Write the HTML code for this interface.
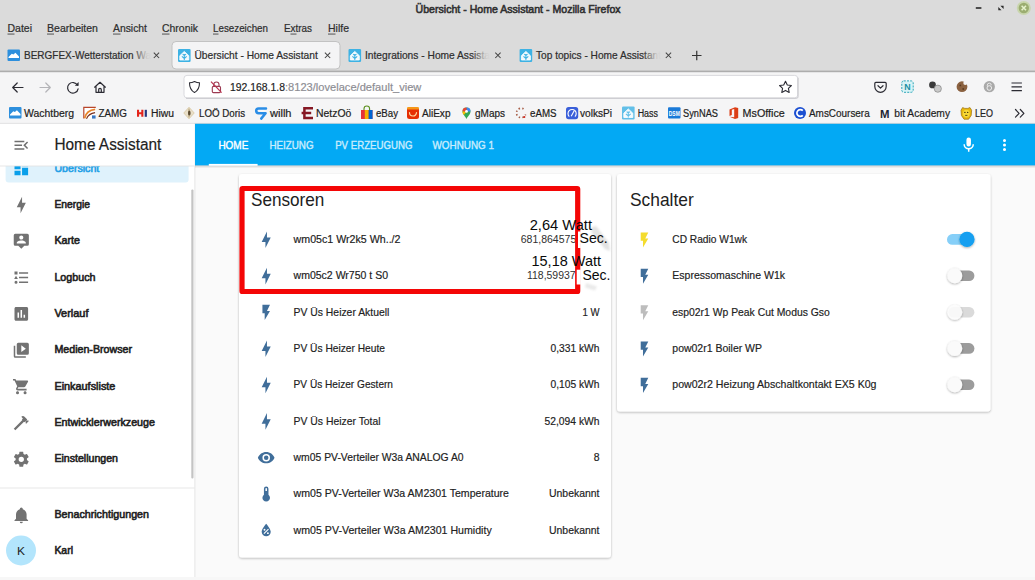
<!DOCTYPE html>
<html lang="de"><head><meta charset="utf-8"><title>Übersicht - Home Assistant</title>
<style>
*{margin:0;padding:0;box-sizing:border-box}
html,body{width:1035px;height:580px;overflow:hidden;background:#fafafa;font-family:"Liberation Sans",sans-serif}
svg text{font-family:"Liberation Sans",sans-serif;white-space:pre}
</style></head><body>
<svg width="1035" height="580" viewBox="0 0 1035 580" font-family="Liberation Sans, sans-serif" style="position:absolute;left:0;top:0;display:block">
<rect x="0.0" y="0.0" width="1035.0" height="580.0" fill="#fafafa"/>
<rect x="0.0" y="0.0" width="1035.0" height="71.0" fill="#dbdbdb"/>
<rect x="0.0" y="71.0" width="1035.0" height="53.0" fill="#f5f5f6"/>
<rect x="0.0" y="70.6" width="1035.0" height="1.4" fill="#adadad"/>
<rect x="0.0" y="72.0" width="1035.0" height="0.8" fill="#e2e2e3"/>
<text x="415.6" y="12.5" textLength="205.0" lengthAdjust="spacingAndGlyphs" font-size="11.60" font-weight="normal" fill="#303030" stroke="#303030" stroke-width="0.6">Übersicht - Home Assistant - Mozilla Firefox</text>
<rect x="975.8" y="7.2" width="5.6" height="1.6" fill="#2a2a2a"/>
<path d="M1000.4 5.7h3.2v3.2zM998.3 7.1l3.2 3.2h-3.2z" fill="#2a2a2a"/>
<circle cx="1023.8" cy="8" r="7" fill="#c9d6ad"/><circle cx="1023.8" cy="8" r="5.2" fill="#9bad70"/><path d="M1021.6 5.8l4.4 4.4M1026 5.8l-4.4 4.4" stroke="#e6f2cc" stroke-width="1.6" fill="none"/>
<text x="7.5" y="32.0" textLength="24.5" lengthAdjust="spacingAndGlyphs" font-size="11.40" font-weight="normal" fill="#2e2e2e" stroke="#2e2e2e" stroke-width="0.22">Datei</text>
<rect x="7.5" y="33.6" width="7.0" height="0.9" fill="#444"/>
<text x="47.0" y="32.0" textLength="51.0" lengthAdjust="spacingAndGlyphs" font-size="11.40" font-weight="normal" fill="#2e2e2e" stroke="#2e2e2e" stroke-width="0.22">Bearbeiten</text>
<rect x="47.0" y="33.6" width="7.0" height="0.9" fill="#444"/>
<text x="113.0" y="32.0" textLength="34.0" lengthAdjust="spacingAndGlyphs" font-size="11.40" font-weight="normal" fill="#2e2e2e" stroke="#2e2e2e" stroke-width="0.22">Ansicht</text>
<rect x="113.0" y="33.6" width="7.5" height="0.9" fill="#444"/>
<text x="162.0" y="32.0" textLength="36.0" lengthAdjust="spacingAndGlyphs" font-size="11.40" font-weight="normal" fill="#2e2e2e" stroke="#2e2e2e" stroke-width="0.22">Chronik</text>
<rect x="162.0" y="33.6" width="7.5" height="0.9" fill="#444"/>
<text x="213.0" y="32.0" textLength="55.0" lengthAdjust="spacingAndGlyphs" font-size="11.40" font-weight="normal" fill="#2e2e2e" stroke="#2e2e2e" stroke-width="0.22">Lesezeichen</text>
<rect x="213.0" y="33.6" width="5.5" height="0.9" fill="#444"/>
<text x="284.0" y="32.0" textLength="28.0" lengthAdjust="spacingAndGlyphs" font-size="11.40" font-weight="normal" fill="#2e2e2e" stroke="#2e2e2e" stroke-width="0.22">Extras</text>
<rect x="290.5" y="33.6" width="6.0" height="0.9" fill="#444"/>
<text x="328.0" y="32.0" textLength="21.0" lengthAdjust="spacingAndGlyphs" font-size="11.40" font-weight="normal" fill="#2e2e2e" stroke="#2e2e2e" stroke-width="0.22">Hilfe</text>
<rect x="328.0" y="33.6" width="7.5" height="0.9" fill="#444"/>
<rect x="172" y="41.5" width="168" height="27.5" rx="4" fill="#f4f4f5" stroke="#c2c2c2" stroke-width="1"/>
<rect x="7.5" y="49.5" width="12.5" height="11.5" fill="#2d8fdd" rx="1.0"/>
<path d="M8.5 57.1l3.3 -3.4l1.6 0.8l2 -1.8l3.6 3.8v1.6h-10.5z" fill="#fff"/>
<text x="24.0" y="59.0" textLength="127.0" lengthAdjust="spacingAndGlyphs" font-size="11.40" font-weight="normal" fill="#2e2e2e" stroke="#2e2e2e" stroke-width="0.22">BERGFEX-Wetterstation Wa</text>
<path d="M153.8 52.7l5.3 5.3m0 -5.3l-5.3 5.3" stroke="#444" stroke-width="1.05" fill="none"/>
<rect x="178.0" y="48.9" width="12.6" height="13.0" fill="#3db2e4" rx="1.2"/>
<path d="M179.8 55.7l4.5 -4.3l4.5 4.3v4.3h-9z" fill="#ffffff" fill-opacity="0.92" stroke="#fff" stroke-width="0.8" stroke-linejoin="round"/>
<path d="M184.3 60.1v-6.2m-2.4 2.4l2.4 2.2l2.4 -2.2m-4 -2.2l1.6 1.5l1.6 -1.5" fill="none" stroke="#3db2e4" stroke-width="1.05"/>
<text x="194.4" y="59.0" textLength="123.4" lengthAdjust="spacingAndGlyphs" font-size="11.40" font-weight="normal" fill="#2e2e2e" stroke="#2e2e2e" stroke-width="0.22">Übersicht - Home Assistant</text>
<path d="M324.9 52.7l5.3 5.3m0 -5.3l-5.3 5.3" stroke="#444" stroke-width="1.05" fill="none"/>
<rect x="348.5" y="48.9" width="12.6" height="13.0" fill="#3db2e4" rx="1.2"/>
<path d="M350.3 55.7l4.5 -4.3l4.5 4.3v4.3h-9z" fill="#ffffff" fill-opacity="0.92" stroke="#fff" stroke-width="0.8" stroke-linejoin="round"/>
<path d="M354.8 60.1v-6.2m-2.4 2.4l2.4 2.2l2.4 -2.2m-4 -2.2l1.6 1.5l1.6 -1.5" fill="none" stroke="#3db2e4" stroke-width="1.05"/>
<text x="365.0" y="59.0" textLength="125.0" lengthAdjust="spacingAndGlyphs" font-size="11.40" font-weight="normal" fill="#2e2e2e" stroke="#2e2e2e" stroke-width="0.22">Integrations - Home Assista</text>
<path d="M495.3 52.7l5.3 5.3m0 -5.3l-5.3 5.3" stroke="#444" stroke-width="1.05" fill="none"/>
<rect x="519.6" y="48.9" width="12.6" height="13.0" fill="#3db2e4" rx="1.2"/>
<path d="M521.4 55.7l4.5 -4.3l4.5 4.3v4.3h-9z" fill="#ffffff" fill-opacity="0.92" stroke="#fff" stroke-width="0.8" stroke-linejoin="round"/>
<path d="M525.9 60.1v-6.2m-2.4 2.4l2.4 2.2l2.4 -2.2m-4 -2.2l1.6 1.5l1.6 -1.5" fill="none" stroke="#3db2e4" stroke-width="1.05"/>
<text x="536.0" y="59.0" textLength="125.0" lengthAdjust="spacingAndGlyphs" font-size="11.40" font-weight="normal" fill="#2e2e2e" stroke="#2e2e2e" stroke-width="0.22">Top topics - Home Assistant</text>
<path d="M665.8 52.7l5.3 5.3m0 -5.3l-5.3 5.3" stroke="#444" stroke-width="1.05" fill="none"/>
<defs><linearGradient id="fd"><stop offset="0" stop-color="#dbdbdb" stop-opacity="0"/><stop offset="0.75" stop-color="#dbdbdb" stop-opacity="0.93"/><stop offset="1" stop-color="#dbdbdb" stop-opacity="1"/></linearGradient></defs>
<rect x="133.0" y="46.0" width="19.0" height="18.0" fill="url(#fd)"/>
<rect x="472.0" y="46.0" width="19.0" height="18.0" fill="url(#fd)"/>
<rect x="643.0" y="46.0" width="19.0" height="18.0" fill="url(#fd)"/>
<path d="M692 55.5h9.5M696.75 50.8v9.5" stroke="#333" stroke-width="1.2" fill="none"/>
<rect x="184" y="75.4" width="613.7" height="22.5" rx="3" fill="#fff" stroke="#d6d6da" stroke-width="0.9"/><path d="M186 98.3h610.5a1.6 1.6 0 0 0 1.6 -1.6v-19" stroke="#c4c4c8" stroke-width="0.9" fill="none"/>
<path d="M23 87.5h-10M17.2 83l-4.5 4.5l4.5 4.5" stroke="#2b2b33" stroke-width="1.2" fill="none" stroke-linecap="round" stroke-linejoin="round"/>
<path d="M40 87.5h10M45.8 83l4.5 4.5l-4.5 4.5" stroke="#b4b4b8" stroke-width="1.2" fill="none" stroke-linecap="round" stroke-linejoin="round"/>
<path d="M77.5 85.2a5.3 5.3 0 1 0 0.6 3.6" stroke="#2b2b33" stroke-width="1.2" fill="none" stroke-linecap="round"/><path d="M78.6 82v3.8h-3.8z" fill="#2b2b33"/>
<path d="M94.6 87.2l5.4 -4.9l5.4 4.9M96 86.2v6.1h8v-6.1M98.7 92.3v-2.6a1.3 1.3 0 0 1 2.6 0v2.6" stroke="#2b2b33" stroke-width="1.2" fill="none" stroke-linejoin="round" stroke-linecap="round"/>
<path d="M194.5 81.5c1.8 1 3.4 1.3 5 1.3c0 4.5 -1.2 7.8 -5 9.7c-3.8 -1.9 -5 -5.2 -5 -9.7c1.6 0 3.2 -0.3 5 -1.3z" stroke="#2b2b33" stroke-width="1.1" fill="none" stroke-linejoin="round"/>
<rect x="212.3" y="86.4" width="8.2" height="6.2" rx="1.2" stroke="#9c3a52" stroke-width="1.1" fill="none"/><path d="M213.8 86.4v-1.8a2.6 2.6 0 0 1 5.2 0v1.8" stroke="#9c3a52" stroke-width="1.1" fill="none"/><path d="M211 81.6l10.6 11" stroke="#b8324e" stroke-width="1.2"/>
<text x="230.0" y="91.3" textLength="55.0" lengthAdjust="spacingAndGlyphs" font-size="11.00" font-weight="normal" fill="#1c1c22" stroke="#1c1c22" stroke-width="0.18">192.168.1.8</text>
<text x="285.0" y="91.3" textLength="136.4" lengthAdjust="spacingAndGlyphs" font-size="11.00" font-weight="normal" fill="#8d8d93" stroke="#8d8d93" stroke-width="0.18">:8123/lovelace/default_view</text>
<path d="M785.5 81.2l1.8 3.8l4.1 0.5l-3 2.8l0.8 4.1l-3.7 -2l-3.7 2l0.8 -4.1l-3 -2.8l4.1 -0.5z" stroke="#2b2b33" stroke-width="1.1" fill="none" stroke-linejoin="round"/>
<g transform="translate(0,-0.6)">
<path d="M875.8 83h9.4a1 1 0 0 1 1 1v3.2a5.7 5.7 0 0 1 -11.4 0v-3.2a1 1 0 0 1 1 -1z" stroke="#2b2b33" stroke-width="1.2" fill="none"/><path d="M878 86.3l2.5 2.4l2.5 -2.4" stroke="#2b2b33" stroke-width="1.2" fill="none" stroke-linecap="round" stroke-linejoin="round"/>
<rect x="901.8" y="81.5" width="11.4" height="11.4" rx="2" fill="#d8f3f6" stroke="#2aa5b8" stroke-width="1" stroke-dasharray="2 1.2"/>
<text x="904.3" y="91.0" textLength="6.4" lengthAdjust="spacingAndGlyphs" font-size="9.50" font-weight="bold" fill="#1b8fa3">N</text>
<circle cx="932.5" cy="85.5" r="3.4" fill="#3a3a3a"/><circle cx="937.8" cy="89.3" r="3.6" fill="#c9c9c9" stroke="#777" stroke-width="0.6"/>
<circle cx="962" cy="87.3" r="5.4" fill="#8a6140"/><circle cx="965.3" cy="83.6" r="2" fill="#f5f5f6"/><circle cx="960.3" cy="86" r="0.9" fill="#5a3a20"/><circle cx="963.2" cy="89.6" r="0.9" fill="#5a3a20"/>
<circle cx="989.3" cy="87.3" r="5.6" fill="#a9a9a9"/><circle cx="989.3" cy="88.6" r="2.3" fill="none" stroke="#eee" stroke-width="1"/><path d="M987.3 87v-1.2a2 2 0 0 1 4 0" stroke="#eee" stroke-width="0.9" fill="none"/>
<path d="M1011.5 83.6h10.4M1011.5 87.4h10.4M1011.5 91.2h10.4" stroke="#2b2b33" stroke-width="1.2"/>
</g>
<text x="24.0" y="117.0" textLength="50.0" lengthAdjust="spacingAndGlyphs" font-size="11.70" font-weight="normal" fill="#1e1e22" stroke="#1e1e22" stroke-width="0.22">Wachtberg</text>
<text x="98.5" y="117.0" textLength="28.5" lengthAdjust="spacingAndGlyphs" font-size="11.70" font-weight="normal" fill="#1e1e22" stroke="#1e1e22" stroke-width="0.22">ZAMG</text>
<text x="151.0" y="117.0" textLength="23.0" lengthAdjust="spacingAndGlyphs" font-size="11.70" font-weight="normal" fill="#1e1e22" stroke="#1e1e22" stroke-width="0.22">Hiwu</text>
<text x="199.0" y="117.0" textLength="46.0" lengthAdjust="spacingAndGlyphs" font-size="11.70" font-weight="normal" fill="#1e1e22" stroke="#1e1e22" stroke-width="0.22">LOÖ Doris</text>
<text x="270.0" y="117.0" textLength="21.5" lengthAdjust="spacingAndGlyphs" font-size="11.70" font-weight="normal" fill="#1e1e22" stroke="#1e1e22" stroke-width="0.22">willh</text>
<text x="316.0" y="117.0" textLength="35.3" lengthAdjust="spacingAndGlyphs" font-size="11.70" font-weight="normal" fill="#1e1e22" stroke="#1e1e22" stroke-width="0.22">NetzOö</text>
<text x="376.0" y="117.0" textLength="22.0" lengthAdjust="spacingAndGlyphs" font-size="11.70" font-weight="normal" fill="#1e1e22" stroke="#1e1e22" stroke-width="0.22">eBay</text>
<text x="422.0" y="117.0" textLength="28.5" lengthAdjust="spacingAndGlyphs" font-size="11.70" font-weight="normal" fill="#1e1e22" stroke="#1e1e22" stroke-width="0.22">AliExp</text>
<text x="475.0" y="117.0" textLength="30.0" lengthAdjust="spacingAndGlyphs" font-size="11.70" font-weight="normal" fill="#1e1e22" stroke="#1e1e22" stroke-width="0.22">gMaps</text>
<text x="530.0" y="117.0" textLength="26.5" lengthAdjust="spacingAndGlyphs" font-size="11.70" font-weight="normal" fill="#1e1e22" stroke="#1e1e22" stroke-width="0.22">eAMS</text>
<text x="580.0" y="117.0" textLength="32.0" lengthAdjust="spacingAndGlyphs" font-size="11.70" font-weight="normal" fill="#1e1e22" stroke="#1e1e22" stroke-width="0.22">volksPi</text>
<text x="637.7" y="117.0" textLength="20.3" lengthAdjust="spacingAndGlyphs" font-size="11.70" font-weight="normal" fill="#1e1e22" stroke="#1e1e22" stroke-width="0.22">Hass</text>
<text x="683.0" y="117.0" textLength="35.0" lengthAdjust="spacingAndGlyphs" font-size="11.70" font-weight="normal" fill="#1e1e22" stroke="#1e1e22" stroke-width="0.22">SynNAS</text>
<text x="742.6" y="117.0" textLength="42.2" lengthAdjust="spacingAndGlyphs" font-size="11.70" font-weight="normal" fill="#1e1e22" stroke="#1e1e22" stroke-width="0.22">MsOffice</text>
<text x="809.0" y="117.0" textLength="60.7" lengthAdjust="spacingAndGlyphs" font-size="11.70" font-weight="normal" fill="#1e1e22" stroke="#1e1e22" stroke-width="0.22">AmsCoursera</text>
<text x="894.3" y="117.0" textLength="55.7" lengthAdjust="spacingAndGlyphs" font-size="11.70" font-weight="normal" fill="#1e1e22" stroke="#1e1e22" stroke-width="0.22">bit Academy</text>
<text x="975.0" y="117.0" textLength="18.0" lengthAdjust="spacingAndGlyphs" font-size="11.70" font-weight="normal" fill="#1e1e22" stroke="#1e1e22" stroke-width="0.22">LEO</text>
<rect x="9.0" y="107.0" width="12.5" height="11.5" fill="#2d8fdd" rx="1.0"/>
<path d="M10.0 114.6l3.3 -3.4l1.6 0.8l2 -1.8l3.6 3.8v1.6h-10.5z" fill="#fff"/>
<rect x="83.5" y="107" width="12.3" height="11.6" fill="#fff"/><path d="M83.8 118.6v-11.3h12" stroke="#b8452a" stroke-width="1.2" fill="none"/><path d="M84.6 118.2c1.2 -5.2 5 -8.2 10.6 -8.8" stroke="#e8852a" stroke-width="1.7" fill="none"/><path d="M86.5 118.8c1.4 -3.6 4.2 -5.6 8.6 -6.2" stroke="#7a3020" stroke-width="1.1" fill="none"/><rect x="92" y="115.4" width="3.6" height="3.2" fill="#3a78c2"/>
<path d="M137 109.8h2.1v2.5h2.2v-2.5h2.1v7h-2.1v-2.6h-2.2v2.6h-2.1z" fill="#e3241b"/><rect x="144.7" y="109.8" width="2.2" height="7" fill="#27367f"/>
<path d="M189 107l5.5 6l-5.5 6l-5.5 -6z" fill="#e9dfc9"/><path d="M189 108.5v9" stroke="#b09a6a" stroke-width="1"/><ellipse cx="189.3" cy="113" rx="1.3" ry="2.6" fill="#5a4a30"/><path d="M183.8 113l5.2 -5.8l5.2 5.8l-5.2 5.8z" fill="none" stroke="#d9caa8" stroke-width="0.8"/>
<path d="M266 108.4h-7.4a2.4 2.4 0 0 0 0 4.8h7l-4.4 5.4" stroke="#2a8de6" stroke-width="2.5" fill="none" stroke-linejoin="round" stroke-linecap="round"/><path d="M260.5 110.9h4" stroke="#fff" stroke-width="0.7"/>
<path d="M313 108.3h-8.6v9.6h8.6M301.6 113.1h9.6" stroke="#861824" stroke-width="2.5" fill="none"/>
<rect x="361" y="110" width="11.5" height="9" fill="#e53238"/><rect x="364.8" y="110" width="3.9" height="9" fill="#f5af02"/><rect x="368.7" y="110" width="3.8" height="9" fill="#0064d2"/><rect x="361" y="110" width="2" height="9" fill="#86b817" opacity="0"/><path d="M364 110v-1.2a2.8 2.8 0 0 1 5.6 0v1.2" stroke="#5a8f1c" stroke-width="1.1" fill="none"/>
<rect x="407" y="107" width="12" height="12" rx="2.5" fill="#e62e04"/><path d="M409.5 112.5a3.5 3.5 0 0 0 7 0" stroke="#ffd9a0" stroke-width="1.2" fill="none" stroke-linecap="round"/><rect x="407" y="107" width="12" height="2.6" rx="1.2" fill="#f6a21a" opacity="0.9"/>
<path d="M466.5 119c-1.2 -3 -4 -4.6 -4 -7.6a4 4 0 0 1 8 0c0 3 -2.8 4.6 -4 7.6z" fill="#34a853"/><path d="M466.5 107.4a4 4 0 0 1 4 4l-4 0z" fill="#4285f4"/><path d="M462.5 111.4a4 4 0 0 1 4 -4v4z" fill="#ea4335"/><path d="M462.5 111.4h4l-2.6 3.6c-0.9 -1.1 -1.4 -2.2 -1.4 -3.6z" fill="#fbbc04"/><circle cx="466.5" cy="111.4" r="1.4" fill="#fff"/>
<path d="M523.6 108.9a4.7 4.7 0 1 0 2 5.6" fill="none" stroke="#a8604a" stroke-width="1.6" stroke-dasharray="1.5 2.1"/><circle cx="524.3" cy="117" r="1.1" fill="#d1281e"/>
<rect x="566" y="107" width="12.2" height="12.2" rx="2.6" fill="#3a5fd9"/><path d="M569.3 116.6a4.1 4.1 0 1 1 5.6 0" stroke="#fff" stroke-width="1.1" fill="none"/><path d="M571.2 116.3l3 -5.6" stroke="#fff" stroke-width="1.1"/>
<rect x="622.0" y="106.4" width="12.6" height="13.0" fill="#62bfe8" rx="1.2"/>
<path d="M623.8 113.2l4.5 -4.3l4.5 4.3v4.3h-9z" fill="#ffffff" fill-opacity="0.92" stroke="#fff" stroke-width="0.8" stroke-linejoin="round"/>
<path d="M628.3 117.6v-6.2m-2.4 2.4l2.4 2.2l2.4 -2.2m-4 -2.2l1.6 1.5l1.6 -1.5" fill="none" stroke="#62bfe8" stroke-width="1.05"/>
<rect x="668.0" y="107.2" width="12.5" height="11.4" fill="#1a7ad8" rx="1.0"/>
<text x="668.8" y="116.0" textLength="11.0" lengthAdjust="spacingAndGlyphs" font-size="7.60" font-weight="bold" fill="#fff">DSM</text>
<path d="M729.5 109.5l5.5 -2.3l3.2 0.9v10l-3.2 0.9l-5.5 -2.3l4.7 0.6v-8.2l-2.4 0.6v5.4l-2.3 0.9z" fill="#dc3e15"/>
<circle cx="800" cy="113" r="6" fill="#1b4fd1"/><path d="M802.8 110.7a3.4 3.4 0 1 0 0 4.6" stroke="#fff" stroke-width="1.7" fill="none"/>
<text x="880.0" y="117.5" textLength="9.5" lengthAdjust="spacingAndGlyphs" font-size="11.50" font-weight="bold" fill="#1d2433">M</text>
<path d="M961 110.2l1.6 -2.6l2.2 0.8h3l2.2 -0.8l1.6 2.6l-0.4 5.2l-2.6 3.8h-4.6l-2.6 -3.8z" fill="#e9b90f" stroke="#9a6f0c" stroke-width="0.7"/><ellipse cx="966.3" cy="113.6" rx="3.4" ry="3.8" fill="#f8d936"/><circle cx="964.9" cy="112.4" r="0.7" fill="#3a2a08"/><circle cx="967.7" cy="112.4" r="0.7" fill="#3a2a08"/><path d="M965.2 115.4h2.2" stroke="#3a2a08" stroke-width="0.8"/>
<path d="M1015.5 109.5l3.6 3.8l-3.6 3.8M1020.3 109.5l3.6 3.8l-3.6 3.8" stroke="#2b2b33" stroke-width="1.2" fill="none" stroke-linecap="round" stroke-linejoin="round"/>
<rect x="0.0" y="122.9" width="1035.0" height="0.9" fill="#d2d2d2"/>
<rect x="0.0" y="123.8" width="194.5" height="456.2" fill="#ffffff"/>
<rect x="194.5" y="123.8" width="0.8" height="456.2" fill="#e1e1e1"/>
<rect x="5.6" y="150.0" width="183.0" height="32.6" fill="#dff2fc" rx="3.0"/>
<path transform="translate(12.23 159.43) scale(0.756)" fill="#0a9fea" d="M13,3V9H21V3M13,21H21V11H13M3,21H11V15H3M3,13H11V3H3V13Z"/>
<text x="54.4" y="171.7" textLength="44.9" lengthAdjust="spacingAndGlyphs" font-size="11.10" font-weight="normal" fill="#1f9fe6" stroke="#1f9fe6" stroke-width="0.6">Übersicht</text>
<rect x="0.0" y="123.8" width="194.5" height="42.2" fill="#ffffff"/>
<rect x="0.0" y="165.6" width="194.5" height="0.8" fill="#e1e1e1"/>
<path transform="translate(12.23 136.13) scale(0.756)" fill="#6f6f6f" d="M21,15.61L19.59,17L14.58,12L19.59,7L21,8.39L17.44,12L21,15.61M3,6H16V8H3V6M3,13V11H13V13H3M3,18V16H16V18H3Z"/>
<text x="54.4" y="150.4" textLength="106.9" lengthAdjust="spacingAndGlyphs" font-size="17.20" font-weight="normal" fill="#212121" stroke="#212121" stroke-width="0.18">Home Assistant</text>
<text x="54.4" y="208.0" textLength="35.6" lengthAdjust="spacingAndGlyphs" font-size="11.10" font-weight="normal" fill="#212121" stroke="#212121" stroke-width="0.6">Energie</text>
<path transform="translate(12.23 195.93) scale(0.756)" fill="#727272" d="M11,15H6L13,1V9H18L11,23V15Z"/>
<text x="54.4" y="244.3" textLength="25.6" lengthAdjust="spacingAndGlyphs" font-size="11.10" font-weight="normal" fill="#212121" stroke="#212121" stroke-width="0.6">Karte</text>
<path transform="translate(12.23 232.23) scale(0.756)" fill="#727272" d="M20,2H4A2,2 0 0,0 2,4V16A2,2 0 0,0 4,18H8L12,22L16,18H20A2,2 0 0,0 22,16V4A2,2 0 0,0 20,2M12,4.3C13.5,4.3 14.7,5.5 14.7,7C14.7,8.5 13.5,9.7 12,9.7C10.5,9.7 9.3,8.5 9.3,7C9.3,5.5 10.5,4.3 12,4.3M18,15H6V14.1C6,12.1 10,11 12,11C14,11 18,12.1 18,14.1V15Z"/>
<text x="54.4" y="280.6" textLength="41.1" lengthAdjust="spacingAndGlyphs" font-size="11.10" font-weight="normal" fill="#212121" stroke="#212121" stroke-width="0.6">Logbuch</text>
<path transform="translate(12.23 268.53) scale(0.756)" fill="#727272" d="M5,9.5L7.5,14H2.5L5,9.5M3,4H7V8H3V4M5,20A2,2 0 0,0 7,18A2,2 0 0,0 5,16A2,2 0 0,0 3,18A2,2 0 0,0 5,20M9,5V7H21V5H9M9,19H21V17H9V19M9,13H21V11H9V13Z"/>
<text x="54.4" y="316.9" textLength="34.1" lengthAdjust="spacingAndGlyphs" font-size="11.10" font-weight="normal" fill="#212121" stroke="#212121" stroke-width="0.6">Verlauf</text>
<path transform="translate(12.23 304.83) scale(0.756)" fill="#727272" d="M19,3H5C3.9,3 3,3.9 3,5V19C3,20.1 3.9,21 5,21H19C20.1,21 21,20.1 21,19V5C21,3.9 20.1,3 19,3M9,17H7V10H9V17M13,17H11V7H13V17M17,17H15V13H17V17Z"/>
<text x="54.4" y="353.2" textLength="77.6" lengthAdjust="spacingAndGlyphs" font-size="11.10" font-weight="normal" fill="#212121" stroke="#212121" stroke-width="0.6">Medien-Browser</text>
<path transform="translate(12.23 341.13) scale(0.756)" fill="#727272" d="M4,6H2V20A2,2 0 0,0 4,22H18V20H4V6M20,2H8A2,2 0 0,0 6,4V16A2,2 0 0,0 8,18H20A2,2 0 0,0 22,16V4A2,2 0 0,0 20,2M12,14.5V5.5L18,10L12,14.5Z"/>
<text x="54.4" y="389.6" textLength="61.0" lengthAdjust="spacingAndGlyphs" font-size="11.10" font-weight="normal" fill="#212121" stroke="#212121" stroke-width="0.6">Einkaufsliste</text>
<path transform="translate(12.23 377.53) scale(0.756)" fill="#727272" d="M17,18C15.89,18 15,18.89 15,20A2,2 0 0,0 17,22A2,2 0 0,0 19,20C19,18.89 18.1,18 17,18M1,2V4H3L6.6,11.59L5.24,14.04C5.09,14.32 5,14.65 5,15A2,2 0 0,0 7,17H19V15H7.42A0.25,0.25 0 0,1 7.17,14.75C7.17,14.7 7.18,14.66 7.2,14.63L8.1,13H15.55C16.3,13 16.96,12.58 17.3,11.97L20.88,5.5C20.95,5.34 21,5.17 21,5A1,1 0 0,0 20,4H5.21L4.27,2M7,18C5.89,18 5,18.89 5,20A2,2 0 0,0 7,22A2,2 0 0,0 9,20C9,18.89 8.1,18 7,18Z"/>
<text x="54.4" y="425.9" textLength="100.6" lengthAdjust="spacingAndGlyphs" font-size="11.10" font-weight="normal" fill="#212121" stroke="#212121" stroke-width="0.6">Entwicklerwerkzeuge</text>
<path transform="translate(12.23 413.83) scale(0.756)" fill="#727272" d="M2,19.63L13.43,8.2L12.72,7.5L14.14,6.07L12,3.89C13.2,2.7 15.09,2.7 16.27,3.89L19.87,7.5L18.45,8.91H21.29L22,9.62L18.45,13.21L17.74,12.5V9.62L16.27,11.04L15.56,10.33L4.13,21.76L2,19.63Z"/>
<text x="54.4" y="462.3" textLength="63.6" lengthAdjust="spacingAndGlyphs" font-size="11.10" font-weight="normal" fill="#212121" stroke="#212121" stroke-width="0.6">Einstellungen</text>
<path transform="translate(12.23 450.23) scale(0.756)" fill="#727272" d="M12,15.5A3.5,3.5 0 0,1 8.5,12A3.5,3.5 0 0,1 12,8.5A3.5,3.5 0 0,1 15.5,12A3.5,3.5 0 0,1 12,15.5M19.43,12.97C19.47,12.65 19.5,12.33 19.5,12C19.5,11.67 19.47,11.34 19.43,11L21.54,9.37C21.73,9.22 21.78,8.95 21.66,8.73L19.66,5.27C19.54,5.05 19.27,4.96 19.05,5.05L16.56,6.05C16.04,5.66 15.5,5.32 14.87,5.07L14.5,2.42C14.46,2.18 14.25,2 14,2H10C9.75,2 9.54,2.18 9.5,2.42L9.13,5.07C8.5,5.32 7.96,5.66 7.44,6.05L4.95,5.05C4.73,4.96 4.46,5.05 4.34,5.27L2.34,8.73C2.21,8.95 2.27,9.22 2.46,9.37L4.57,11C4.53,11.34 4.5,11.67 4.5,12C4.5,12.33 4.53,12.65 4.57,12.97L2.46,14.63C2.27,14.78 2.21,15.05 2.34,15.27L4.34,18.73C4.46,18.95 4.73,19.03 4.95,18.95L7.44,17.94C7.96,18.34 8.5,18.68 9.13,18.93L9.5,21.58C9.54,21.82 9.75,22 10,22H14C14.25,22 14.46,21.82 14.5,21.58L14.87,18.93C15.5,18.67 16.04,18.34 16.56,17.94L19.05,18.95C19.27,19.03 19.54,18.95 19.66,18.73L21.66,15.27C21.78,15.05 21.73,14.78 21.54,14.63L19.43,12.97Z"/>
<text x="54.4" y="518.0" textLength="94.6" lengthAdjust="spacingAndGlyphs" font-size="11.10" font-weight="normal" fill="#212121" stroke="#212121" stroke-width="0.6">Benachrichtigungen</text>
<path transform="translate(12.23 505.93) scale(0.756)" fill="#727272" d="M21,19V20H3V19L5,17V11C5,7.9 7.03,5.17 10,4.29C10,4.19 10,4.1 10,4A2,2 0 0,1 12,2A2,2 0 0,1 14,4C14,4.1 14,4.19 14,4.29C16.97,5.17 19,7.9 19,11V17L21,19M14,21A2,2 0 0,1 12,23A2,2 0 0,1 10,21"/>
<rect x="0.0" y="487.6" width="194.5" height="0.8" fill="#e1e1e1"/>
<circle cx="21" cy="550.5" r="15" fill="#b3e5fc"/>
<text x="17.0" y="555.0" textLength="8.0" lengthAdjust="spacingAndGlyphs" font-size="11.20" font-weight="normal" fill="#212121">K</text>
<text x="54.4" y="554.0" textLength="18.6" lengthAdjust="spacingAndGlyphs" font-size="11.10" font-weight="normal" fill="#212121" stroke="#212121" stroke-width="0.6">Karl</text>
<rect x="191.3" y="189.5" width="2.2" height="289.0" fill="#c4c4c4" rx="1.0"/>
<rect x="195.0" y="123.8" width="840.0" height="41.6" fill="#03a9f4"/>
<rect x="195" y="165.4" width="840" height="3" fill="url(#hs)"/><defs><linearGradient id="hs" x1="0" y1="0" x2="0" y2="1"><stop offset="0" stop-color="#000" stop-opacity="0.18"/><stop offset="1" stop-color="#000" stop-opacity="0"/></linearGradient></defs>
<text x="218.4" y="148.9" textLength="29.9" lengthAdjust="spacingAndGlyphs" font-size="11.10" font-weight="normal" fill="#ffffff" stroke="#ffffff" stroke-width="0.4">HOME</text>
<text x="269.4" y="148.9" textLength="44.2" lengthAdjust="spacingAndGlyphs" font-size="11.10" font-weight="normal" fill="#c9ecfd" stroke="#c9ecfd" stroke-width="0.4">HEIZUNG</text>
<text x="335.2" y="148.9" textLength="77.2" lengthAdjust="spacingAndGlyphs" font-size="11.10" font-weight="normal" fill="#c9ecfd" stroke="#c9ecfd" stroke-width="0.4">PV ERZEUGUNG</text>
<text x="432.5" y="148.9" textLength="61.5" lengthAdjust="spacingAndGlyphs" font-size="11.10" font-weight="normal" fill="#c9ecfd" stroke="#c9ecfd" stroke-width="0.4">WOHNUNG 1</text>
<rect x="208.8" y="163.9" width="48.8" height="1.9" fill="#ffffff"/>
<path transform="translate(959.63 135.93) scale(0.756)" fill="#ffffff" d="M12,2A3,3 0 0,1 15,5V11A3,3 0 0,1 12,14A3,3 0 0,1 9,11V5A3,3 0 0,1 12,2M19,11C19,14.53 16.39,17.44 13,17.93V21H11V17.93C7.61,17.44 5,14.53 5,11H7A5,5 0 0,0 12,16A5,5 0 0,0 17,11H19Z"/>
<path transform="translate(995.43 135.93) scale(0.756)" fill="#ffffff" d="M12,16A2,2 0 0,1 14,18A2,2 0 0,1 12,20A2,2 0 0,1 10,18A2,2 0 0,1 12,16M12,10A2,2 0 0,1 14,12A2,2 0 0,1 12,14A2,2 0 0,1 10,12A2,2 0 0,1 12,10M12,4A2,2 0 0,1 14,6A2,2 0 0,1 12,8A2,2 0 0,1 10,6A2,2 0 0,1 12,4Z"/>
<defs><filter id="sh" x="-5%" y="-5%" width="110%" height="112%"><feDropShadow dx="0" dy="1" stdDeviation="1.1" flood-color="#000" flood-opacity="0.28"/></filter></defs>
<rect x="239.0" y="174.0" width="372.0" height="383.5" fill="#fff" rx="3.0" filter="url(#sh)"/>
<rect x="617.0" y="174.0" width="373.5" height="237.5" fill="#fff" rx="3.0" filter="url(#sh)"/>
<text x="251.0" y="206.3" textLength="73.4" lengthAdjust="spacingAndGlyphs" font-size="18.20" font-weight="normal" fill="#212121">Sensoren</text>
<text x="630.0" y="206.3" textLength="63.7" lengthAdjust="spacingAndGlyphs" font-size="18.20" font-weight="normal" fill="#212121">Schalter</text>
<text x="293.6" y="243.1" textLength="106.9" lengthAdjust="spacingAndGlyphs" font-size="11.10" font-weight="normal" fill="#212121" stroke="#212121" stroke-width="0.18">wm05c1 Wr2k5 Wh../2</text>
<path transform="translate(257.13 230.73) scale(0.756)" fill="#406e9a" d="M11,15H6L13,1V9H18L11,23V15Z"/>
<text x="293.6" y="279.4" textLength="94.4" lengthAdjust="spacingAndGlyphs" font-size="11.10" font-weight="normal" fill="#212121" stroke="#212121" stroke-width="0.18">wm05c2 Wr750 t S0</text>
<path transform="translate(257.13 267.03) scale(0.756)" fill="#406e9a" d="M11,15H6L13,1V9H18L11,23V15Z"/>
<text x="293.6" y="315.7" textLength="95.7" lengthAdjust="spacingAndGlyphs" font-size="11.10" font-weight="normal" fill="#212121" stroke="#212121" stroke-width="0.18">PV Üs Heizer Aktuell</text>
<path transform="translate(257.13 303.33) scale(0.756)" fill="#406e9a" d="M7,2V13H10V22L17,10H13L17,2H7Z"/>
<text x="582.5" y="315.7" textLength="17.0" lengthAdjust="spacingAndGlyphs" font-size="11.10" font-weight="normal" fill="#212121" stroke="#212121" stroke-width="0.18">1 W</text>
<text x="293.6" y="352.0" textLength="91.4" lengthAdjust="spacingAndGlyphs" font-size="11.10" font-weight="normal" fill="#212121" stroke="#212121" stroke-width="0.18">PV Üs Heizer Heute</text>
<path transform="translate(257.13 339.63) scale(0.756)" fill="#406e9a" d="M11,15H6L13,1V9H18L11,23V15Z"/>
<text x="550.5" y="352.0" textLength="49.0" lengthAdjust="spacingAndGlyphs" font-size="11.10" font-weight="normal" fill="#212121" stroke="#212121" stroke-width="0.18">0,331 kWh</text>
<text x="293.6" y="388.3" textLength="99.4" lengthAdjust="spacingAndGlyphs" font-size="11.10" font-weight="normal" fill="#212121" stroke="#212121" stroke-width="0.18">PV Üs Heizer Gestern</text>
<path transform="translate(257.13 375.93) scale(0.756)" fill="#406e9a" d="M11,15H6L13,1V9H18L11,23V15Z"/>
<text x="550.5" y="388.3" textLength="49.0" lengthAdjust="spacingAndGlyphs" font-size="11.10" font-weight="normal" fill="#212121" stroke="#212121" stroke-width="0.18">0,105 kWh</text>
<text x="293.6" y="424.7" textLength="87.0" lengthAdjust="spacingAndGlyphs" font-size="11.10" font-weight="normal" fill="#212121" stroke="#212121" stroke-width="0.18">PV Üs Heizer Total</text>
<path transform="translate(257.13 412.33) scale(0.756)" fill="#406e9a" d="M11,15H6L13,1V9H18L11,23V15Z"/>
<text x="544.5" y="424.7" textLength="55.0" lengthAdjust="spacingAndGlyphs" font-size="11.10" font-weight="normal" fill="#212121" stroke="#212121" stroke-width="0.18">52,094 kWh</text>
<text x="293.6" y="461.0" textLength="170.0" lengthAdjust="spacingAndGlyphs" font-size="11.10" font-weight="normal" fill="#212121" stroke="#212121" stroke-width="0.18">wm05 PV-Verteiler W3a ANALOG A0</text>
<path transform="translate(257.13 448.63) scale(0.756)" fill="#406e9a" d="M12,9A3,3 0 0,0 9,12A3,3 0 0,0 12,15A3,3 0 0,0 15,12A3,3 0 0,0 12,9M12,17A5,5 0 0,1 7,12A5,5 0 0,1 12,7A5,5 0 0,1 17,12A5,5 0 0,1 12,17M12,4.5C7,4.5 2.73,7.61 1,12C2.73,16.39 7,19.5 12,19.5C17,19.5 21.27,16.39 23,12C21.27,7.61 17,4.5 12,4.5Z"/>
<text x="593.7" y="461.0" textLength="5.8" lengthAdjust="spacingAndGlyphs" font-size="11.10" font-weight="normal" fill="#212121" stroke="#212121" stroke-width="0.18">8</text>
<text x="293.6" y="497.3" textLength="215.4" lengthAdjust="spacingAndGlyphs" font-size="11.10" font-weight="normal" fill="#212121" stroke="#212121" stroke-width="0.18">wm05 PV-Verteiler W3a AM2301 Temperature</text>
<path transform="translate(257.13 484.93) scale(0.756)" fill="#406e9a" d="M15,13V5A3,3 0 0,0 9,5V13A5,5 0 1,0 15,13M12,4A1,1 0 0,1 13,5V8H11V5A1,1 0 0,1 12,4Z"/>
<text x="549.0" y="497.3" textLength="50.5" lengthAdjust="spacingAndGlyphs" font-size="11.10" font-weight="normal" fill="#212121" stroke="#212121" stroke-width="0.18">Unbekannt</text>
<text x="293.6" y="533.6" textLength="198.1" lengthAdjust="spacingAndGlyphs" font-size="11.10" font-weight="normal" fill="#212121" stroke="#212121" stroke-width="0.18">wm05 PV-Verteiler W3a AM2301 Humidity</text>
<path transform="translate(257.13 521.23) scale(0.756)" fill="#406e9a" d="M12,3.25C12,3.25 6,10 6,14C6,17.32 8.69,20 12,20A6,6 0 0,0 18,14C18,10 12,3.25 12,3.25M14.47,9.97L15.53,11.03L9.53,17.03L8.47,15.97M9.75,10A1.25,1.25 0 0,1 11,11.25A1.25,1.25 0 0,1 9.75,12.5A1.25,1.25 0 0,1 8.5,11.25A1.25,1.25 0 0,1 9.75,10M14.25,14.5A1.25,1.25 0 0,1 15.5,15.75A1.25,1.25 0 0,1 14.25,17A1.25,1.25 0 0,1 13,15.75A1.25,1.25 0 0,1 14.25,14.5Z"/>
<text x="549.0" y="533.6" textLength="50.5" lengthAdjust="spacingAndGlyphs" font-size="11.10" font-weight="normal" fill="#212121" stroke="#212121" stroke-width="0.18">Unbekannt</text>
<text x="520.7" y="242.9" textLength="55.6" lengthAdjust="spacingAndGlyphs" font-size="11.10" font-weight="normal" fill="#303030">681,864575</text>
<text x="527.0" y="279.4" textLength="48.6" lengthAdjust="spacingAndGlyphs" font-size="11.10" font-weight="normal" fill="#303030">118,59937</text>
<defs><filter id="ts" x="-30%" y="-30%" width="160%" height="170%"><feDropShadow dx="0" dy="0.8" stdDeviation="0.9" flood-color="#000" flood-opacity="0.35"/></filter></defs>
<text x="672.3" y="243.0" textLength="74.7" lengthAdjust="spacingAndGlyphs" font-size="11.10" font-weight="normal" fill="#212121" stroke="#212121" stroke-width="0.18">CD Radio W1wk</text>
<path transform="translate(635.43 230.93) scale(0.756)" fill="#f4dc2e" d="M7,2V13H10V22L17,10H13L17,2H7Z"/>
<rect x="947.0" y="234.1" width="25.5" height="10.6" fill="#86cff8" rx="5.3"/>
<circle cx="967" cy="239.4" r="7.6" fill="#129ff0" filter="url(#ts)"/>
<text x="672.3" y="279.3" textLength="112.7" lengthAdjust="spacingAndGlyphs" font-size="11.10" font-weight="normal" fill="#212121" stroke="#212121" stroke-width="0.18">Espressomaschine W1k</text>
<path transform="translate(635.43 267.23) scale(0.756)" fill="#406e9a" d="M7,2V13H10V22L17,10H13L17,2H7Z"/>
<rect x="948.4" y="270.4" width="26.0" height="10.6" fill="#9c9c9c" rx="5.3"/>
<circle cx="954.8" cy="275.7" r="7.5" fill="#fafafa" filter="url(#ts)"/>
<text x="672.3" y="315.8" textLength="157.5" lengthAdjust="spacingAndGlyphs" font-size="11.10" font-weight="normal" fill="#212121" stroke="#212121" stroke-width="0.18">esp02r1 Wp Peak Cut Modus Gso</text>
<path transform="translate(635.43 303.73) scale(0.756)" fill="#bdbdbd" d="M7,2V13H10V22L17,10H13L17,2H7Z"/>
<rect x="948.4" y="306.9" width="26.0" height="10.6" fill="#dadada" rx="5.3"/>
<circle cx="954.8" cy="312.2" r="7.5" fill="#fcfcfc" filter="url(#ts)" opacity="0.9"/>
<text x="672.3" y="352.0" textLength="89.7" lengthAdjust="spacingAndGlyphs" font-size="11.10" font-weight="normal" fill="#212121" stroke="#212121" stroke-width="0.18">pow02r1 Boiler WP</text>
<path transform="translate(635.43 339.93) scale(0.756)" fill="#406e9a" d="M7,2V13H10V22L17,10H13L17,2H7Z"/>
<rect x="948.4" y="343.1" width="26.0" height="10.6" fill="#9c9c9c" rx="5.3"/>
<circle cx="954.8" cy="348.4" r="7.5" fill="#fafafa" filter="url(#ts)"/>
<text x="672.3" y="388.4" textLength="204.2" lengthAdjust="spacingAndGlyphs" font-size="11.10" font-weight="normal" fill="#212121" stroke="#212121" stroke-width="0.18">pow02r2 Heizung Abschaltkontakt EX5 K0g</text>
<path transform="translate(635.43 376.33) scale(0.756)" fill="#406e9a" d="M7,2V13H10V22L17,10H13L17,2H7Z"/>
<rect x="948.4" y="379.5" width="26.0" height="10.6" fill="#9c9c9c" rx="5.3"/>
<circle cx="954.8" cy="384.8" r="7.5" fill="#fafafa" filter="url(#ts)"/>
<rect x="242" y="188.5" width="335.7" height="103" rx="0.6" fill="none" stroke="#f40606" stroke-width="5.2" stroke-linejoin="round"/>
<rect x="578.0" y="231.5" width="2.8" height="16.5" fill="#ffffff"/>
<rect x="576.7" y="269.7" width="4.1" height="14.8" fill="#ffffff"/>
<defs><filter id="bl" x="-20%" y="-20%" width="140%" height="140%"><feGaussianBlur stdDeviation="0.9"/></filter></defs>
<path d="M591 227.5l5 -1.5l13 17l1 8l-5 -2l-13 -16z" fill="#cfcfcf" opacity="0.6" filter="url(#bl)"/>
<path d="M586 283l11 3.5l-2 4l-10 -3z" fill="#d4d4d4" opacity="0.5" filter="url(#bl)"/>
<text x="529.7" y="230.1" textLength="62.3" lengthAdjust="spacingAndGlyphs" font-size="14.30" font-weight="normal" fill="#0a0a0a">2,64 Watt</text>
<text x="579.5" y="242.9" textLength="28.2" lengthAdjust="spacingAndGlyphs" font-size="14.30" font-weight="normal" fill="#0a0a0a">Sec.</text>
<text x="531.5" y="266.4" textLength="69.5" lengthAdjust="spacingAndGlyphs" font-size="14.30" font-weight="normal" fill="#0a0a0a">15,18 Watt</text>
<text x="582.4" y="280.3" textLength="28.0" lengthAdjust="spacingAndGlyphs" font-size="14.30" font-weight="normal" fill="#0a0a0a">Sec.</text>
<rect x="0.0" y="577.0" width="1035.0" height="3.0" fill="#f7f7f7"/>
</svg>
</body></html>
